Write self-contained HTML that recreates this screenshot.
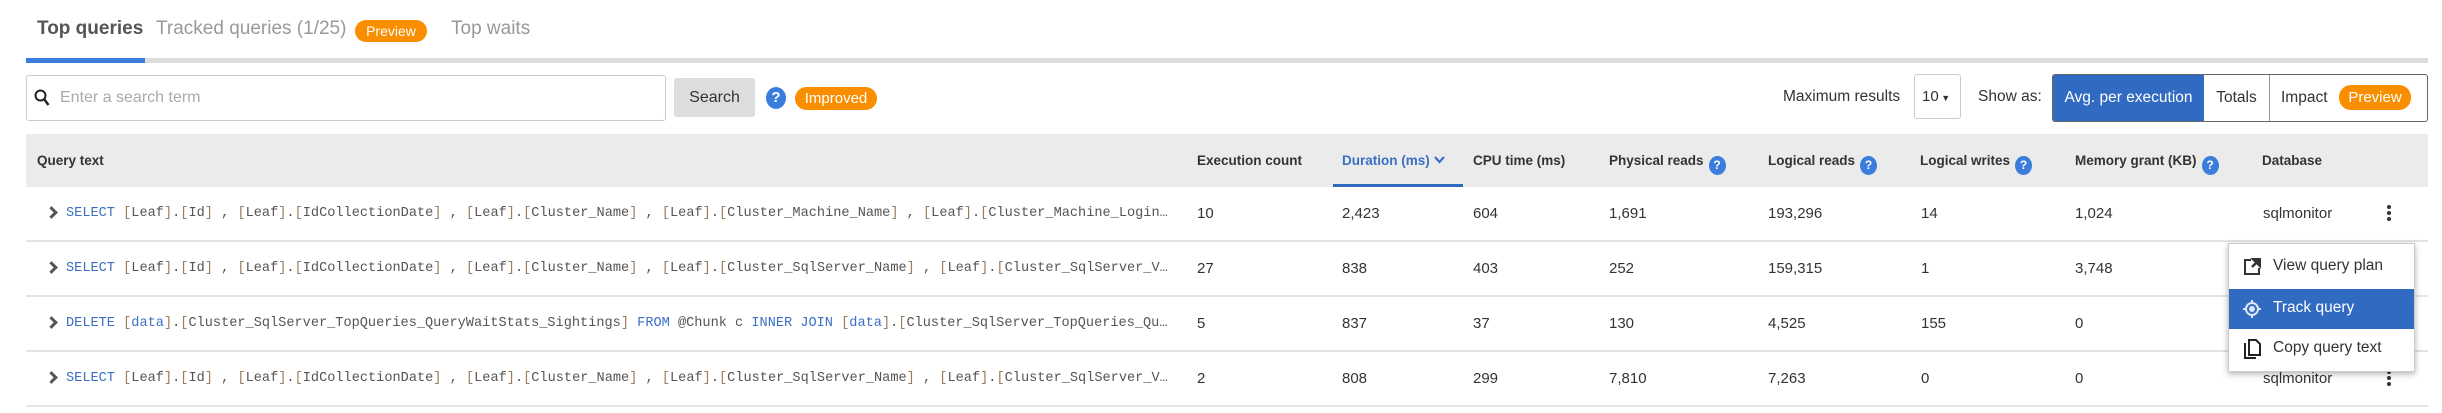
<!DOCTYPE html>
<html><head><meta charset="utf-8"><style>
*{box-sizing:border-box;margin:0;padding:0}
body{width:2442px;height:413px;background:#fff;font-family:"Liberation Sans",sans-serif;color:#333;position:relative;overflow:hidden}
.a{position:absolute;white-space:nowrap}
.tab{font-size:19px;top:18px;color:#999}
.badge{background:#f98e00;color:#fff;border-radius:12px;font-size:14px;text-align:center}
.hd{font-size:13.5px;font-weight:bold;color:#333;top:153px}
.q{display:inline-block;width:17px;height:19px;border-radius:50%;background:#3b7ddd;color:#fff;font-size:12px;font-weight:bold;text-align:center;line-height:19px;vertical-align:-4px;margin-left:5px}
.row{position:absolute;left:26px;width:2402px;height:55px;border-bottom:2px solid #e4e4e4}
.c{position:absolute;top:18px;font-size:15px;color:#333}
.sql{position:absolute;left:40px;top:19px;font-family:"Liberation Mono",monospace;font-size:13.6px;color:#555;width:1106px;overflow:hidden;text-overflow:ellipsis;white-space:nowrap}
.k{color:#3a6fc4}.b{color:#9a7d5c}
.chev{position:absolute;left:21px;top:21px;width:9px;height:9px;border-right:3px solid #555;border-top:3px solid #555;transform:rotate(45deg)}
.keb{position:absolute;left:2361px;top:18px;width:4px}
.keb i{display:block;width:4px;height:4px;background:#333;border-radius:50%;margin-bottom:2px}
</style></head><body>
<div class="a tab" style="left:37px;color:#555;font-weight:bold">Top queries</div>
<div class="a tab" style="left:156px">Tracked queries (1/25)</div>
<div class="a badge" style="left:355px;top:20px;width:72px;height:22px;line-height:22px">Preview</div>
<div class="a tab" style="left:451px">Top waits</div>
<div class="a" style="left:26px;top:58px;width:2402px;height:5px;background:#dcdcdc"></div>
<div class="a" style="left:26px;top:58px;width:119px;height:5px;background:#3b7ddd"></div>

<div class="a" style="left:26px;top:75px;width:640px;height:46px;border:1px solid #ccc;border-radius:3px"></div>
<svg class="a" style="left:34px;top:89px" width="16" height="18" viewBox="0 0 16 18"><circle cx="6.5" cy="6.5" r="5" fill="none" stroke="#222" stroke-width="2"/><path d="M10 10l4.5 6" stroke="#222" stroke-width="2.4"/></svg>
<div class="a" style="left:60px;top:89px;font-size:16px;color:#aaa">Enter a search term</div>
<div class="a" style="left:674px;top:78px;width:81px;height:39px;background:#ddd;border-radius:3px;font-size:16px;text-align:center;line-height:39px;color:#333">Search</div>
<div class="a" style="left:766px;top:87px;width:20px;height:22px;border-radius:50%;background:#3b7ddd;color:#fff;font-weight:bold;font-size:15px;text-align:center;line-height:22px">?</div>
<div class="a badge" style="left:795px;top:87px;width:82px;height:23px;line-height:23px;font-size:15px">Improved</div>

<div class="a" style="left:1783px;top:88px;font-size:15.5px">Maximum results</div>
<div class="a" style="left:1914px;top:74px;width:47px;height:45px;border:1px solid #ccc;border-radius:3px;font-size:15px;line-height:43px;padding-left:7px">10<span style="font-size:9px"> ▼</span></div>
<div class="a" style="left:1978px;top:88px;font-size:15.5px">Show as:</div>
<div class="a" style="left:2052px;top:74px;width:376px;height:48px;border:1px solid #666;border-radius:3px;overflow:hidden">
<div class="a" style="left:0;top:0;width:151px;height:46px;background:#316ac1;color:#fff;font-size:15.5px;text-align:center;line-height:46px">Avg. per execution</div>
<div class="a" style="left:151px;top:0;width:66px;height:46px;border-right:1px solid #999;font-size:15.5px;text-align:center;line-height:46px">Totals</div>
<div class="a" style="left:228px;top:14px;font-size:15.5px">Impact</div>
<div class="a badge" style="left:286px;top:10px;width:72px;height:25px;line-height:25px;font-size:15px">Preview</div>
</div>

<div class="a" style="left:26px;top:134px;width:2402px;height:53px;background:#ebebeb"></div>
<div class="a hd" style="left:37px">Query text</div>
<div class="a hd" style="left:1197px">Execution count</div>
<div class="a hd" style="left:1342px;color:#3a6fc4">Duration (ms) <svg width="11" height="8" viewBox="0 0 11 8" style="vertical-align:1px"><path d="M1 1l4.5 5L10 1" fill="none" stroke="#3a6fc4" stroke-width="2.2"/></svg></div>
<div class="a" style="left:1333px;top:184px;width:130px;height:3px;background:#316ac1"></div>
<div class="a hd" style="left:1473px">CPU time (ms)</div>
<div class="a hd" style="left:1609px">Physical reads<span class="q">?</span></div>
<div class="a hd" style="left:1768px">Logical reads<span class="q">?</span></div>
<div class="a hd" style="left:1920px">Logical writes<span class="q">?</span></div>
<div class="a hd" style="left:2075px">Memory grant (KB)<span class="q">?</span></div>
<div class="a hd" style="left:2262px">Database</div>

<div class="row" style="top:187px"><div class="chev"></div><div class="sql"><span class="k">SELECT</span> <span class="b">[</span>Leaf<span class="b">]</span>.<span class="b">[</span>Id<span class="b">]</span> , <span class="b">[</span>Leaf<span class="b">]</span>.<span class="b">[</span>IdCollectionDate<span class="b">]</span> , <span class="b">[</span>Leaf<span class="b">]</span>.<span class="b">[</span>Cluster_Name<span class="b">]</span> , <span class="b">[</span>Leaf<span class="b">]</span>.<span class="b">[</span>Cluster_Machine_Name<span class="b">]</span> , <span class="b">[</span>Leaf<span class="b">]</span>.<span class="b">[</span>Cluster_Machine_LoginName<span class="b">]</span></div>
<div class="c" style="left:1171px">10</div><div class="c" style="left:1316px">2,423</div><div class="c" style="left:1447px">604</div><div class="c" style="left:1583px">1,691</div><div class="c" style="left:1742px">193,296</div><div class="c" style="left:1895px">14</div><div class="c" style="left:2049px">1,024</div><div class="c" style="left:2237px">sqlmonitor</div><div class="keb"><i></i><i></i><i></i></div></div>
<div class="row" style="top:242px"><div class="chev"></div><div class="sql"><span class="k">SELECT</span> <span class="b">[</span>Leaf<span class="b">]</span>.<span class="b">[</span>Id<span class="b">]</span> , <span class="b">[</span>Leaf<span class="b">]</span>.<span class="b">[</span>IdCollectionDate<span class="b">]</span> , <span class="b">[</span>Leaf<span class="b">]</span>.<span class="b">[</span>Cluster_Name<span class="b">]</span> , <span class="b">[</span>Leaf<span class="b">]</span>.<span class="b">[</span>Cluster_SqlServer_Name<span class="b">]</span> , <span class="b">[</span>Leaf<span class="b">]</span>.<span class="b">[</span>Cluster_SqlServer_Version<span class="b">]</span></div>
<div class="c" style="left:1171px">27</div><div class="c" style="left:1316px">838</div><div class="c" style="left:1447px">403</div><div class="c" style="left:1583px">252</div><div class="c" style="left:1742px">159,315</div><div class="c" style="left:1895px">1</div><div class="c" style="left:2049px">3,748</div></div>
<div class="row" style="top:297px"><div class="chev"></div><div class="sql"><span class="k">DELETE</span> <span class="b">[</span><span class="k">data</span><span class="b">]</span>.<span class="b">[</span>Cluster_SqlServer_TopQueries_QueryWaitStats_Sightings<span class="b">]</span> <span class="k">FROM</span> @Chunk c <span class="k">INNER JOIN</span> <span class="b">[</span><span class="k">data</span><span class="b">]</span>.<span class="b">[</span>Cluster_SqlServer_TopQueries_QueryWaitStats<span class="b">]</span></div>
<div class="c" style="left:1171px">5</div><div class="c" style="left:1316px">837</div><div class="c" style="left:1447px">37</div><div class="c" style="left:1583px">130</div><div class="c" style="left:1742px">4,525</div><div class="c" style="left:1895px">155</div><div class="c" style="left:2049px">0</div></div>
<div class="row" style="top:352px"><div class="chev"></div><div class="sql"><span class="k">SELECT</span> <span class="b">[</span>Leaf<span class="b">]</span>.<span class="b">[</span>Id<span class="b">]</span> , <span class="b">[</span>Leaf<span class="b">]</span>.<span class="b">[</span>IdCollectionDate<span class="b">]</span> , <span class="b">[</span>Leaf<span class="b">]</span>.<span class="b">[</span>Cluster_Name<span class="b">]</span> , <span class="b">[</span>Leaf<span class="b">]</span>.<span class="b">[</span>Cluster_SqlServer_Name<span class="b">]</span> , <span class="b">[</span>Leaf<span class="b">]</span>.<span class="b">[</span>Cluster_SqlServer_Version<span class="b">]</span></div>
<div class="c" style="left:1171px">2</div><div class="c" style="left:1316px">808</div><div class="c" style="left:1447px">299</div><div class="c" style="left:1583px">7,810</div><div class="c" style="left:1742px">7,263</div><div class="c" style="left:1895px">0</div><div class="c" style="left:2049px">0</div><div class="c" style="left:2237px">sqlmonitor</div><div class="keb"><i></i><i></i><i></i></div></div>

<div class="a" style="left:2228px;top:243px;width:187px;height:129px;background:#fff;border:1px solid #ccc;box-shadow:0 2px 6px rgba(0,0,0,.3)">
<svg class="a" style="left:14px;top:14px" width="18" height="18" viewBox="0 0 18 18"><path d="M8 2H2v14h14v-6" fill="none" stroke="#333" stroke-width="2"/><path d="M10 1h7v7zM16 2l-7 7" stroke="#333" stroke-width="2.5" fill="#333"/></svg>
<div class="a" style="left:44px;top:13px;font-size:15.5px;color:#333">View query plan</div>
<div class="a" style="left:0;top:45px;width:185px;height:40px;background:#316ac1"></div>
<svg class="a" style="left:14px;top:56px" width="18" height="18" viewBox="0 0 18 18"><circle cx="9" cy="9" r="6" fill="none" stroke="#dce8f8" stroke-width="2"/><circle cx="9" cy="9" r="3" fill="#dce8f8"/><path d="M9 0v3M9 15v3M0 9h3M15 9h3" stroke="#dce8f8" stroke-width="2"/></svg>
<div class="a" style="left:44px;top:55px;font-size:15.5px;color:#fff">Track query</div>
<svg class="a" style="left:15px;top:95px" width="18" height="20" viewBox="0 0 18 20"><path d="M1 4v15h11" fill="none" stroke="#222" stroke-width="2"/><path d="M5 1h7l4 4v11H5z" fill="none" stroke="#222" stroke-width="2"/></svg>
<div class="a" style="left:44px;top:95px;font-size:15.5px;color:#333">Copy query text</div>
</div>
</body></html>
